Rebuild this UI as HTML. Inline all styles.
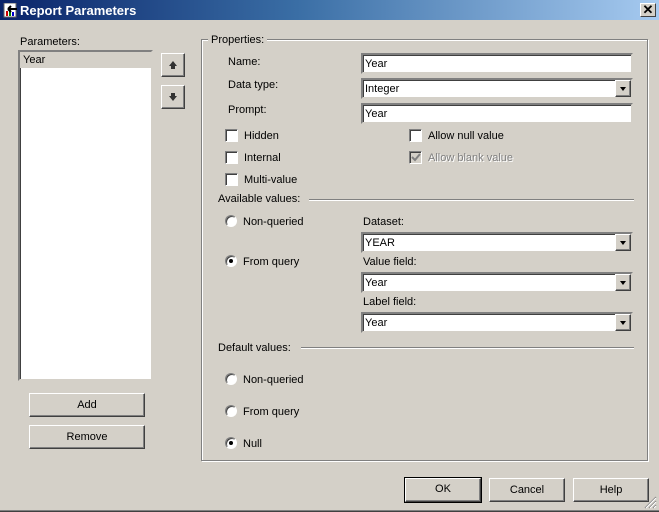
<!DOCTYPE html>
<html><head><meta charset="utf-8"><style>
*{box-sizing:border-box;margin:0;padding:0}
body{width:659px;height:512px;background:#d4d0c8;font-family:"Liberation Sans",sans-serif;font-size:11px;color:#000;position:relative;overflow:hidden}
.a{position:absolute}
.title{left:0;top:0;width:659px;height:20px;background:linear-gradient(90deg,#0a246a 0%,#3a6ea5 45%,#a6caf0 100%);}
.title span{position:absolute;left:20px;top:3px;color:#fff;font-weight:bold;font-size:13px}
.close{left:640px;top:3px;width:16px;height:14px;background:#d4d0c8;border:1px solid;border-color:#fff #404040 #404040 #fff;font-size:13px;font-weight:bold;text-align:center;line-height:12px}
.sunk{background:#fff;border:2px solid;border-color:#808080 #d4d0c8 #d4d0c8 #808080;box-shadow:inset 1px 1px 0 #404040}
.btn{background:#d4d0c8;border:1px solid;border-color:#fff #404040 #404040 #fff;box-shadow:inset -1px -1px 0 #808080;text-align:center}
.tb{height:21px;padding:3px 0 0 2px}
.combo{height:21px;padding:3px 0 0 2px}
.combo i{position:absolute;right:0;top:0;width:16px;height:17px;background:#d4d0c8;border:1px solid;border-color:#fff #404040 #404040 #fff;box-shadow:inset -1px -1px 0 #808080}
.combo i:after{content:"";position:absolute;left:4px;top:6px;border:3.5px solid transparent;border-top:4px solid #000;border-bottom:0}
.cb{width:13px;height:13px;background:#fff;border:1px solid;border-color:#808080 #fff #fff #808080;box-shadow:inset 1px 1px 0 #404040}
.rb{width:12px;height:12px;border-radius:50%;background:#fff;border:1px solid;border-color:#808080 #fff #fff #808080;box-shadow:inset 1px 1px 0 #404040}
.rb.on:after{content:"";position:absolute;left:3px;top:3px;width:4px;height:4px;border-radius:50%;background:#000}
.line{height:2px;border-top:1px solid #808080;border-bottom:1px solid #fff}
.grp{left:201px;top:39px;width:447px;height:422px;border:1px solid #808080;box-shadow:1px 1px 0 #fff,inset 1px 1px 0 #fff}
</style></head><body>
<div class="a title"><svg class="a" style="left:3px;top:3px" width="15" height="15"><rect x="1" y="0" width="12" height="14" fill="#fff" stroke="#666"/><rect x="3" y="8" width="2" height="5" fill="#c00"/><rect x="6" y="7" width="2" height="6" fill="#080"/><rect x="9" y="9" width="2" height="4" fill="#00c"/><path d="M5 6h9M5 6l3-3M5 6l3 3" stroke="#000" stroke-width="2" fill="none"/></svg><span>Report Parameters</span></div>
<div class="a close">✕</div>

<div class="a" style="left:20px;top:36px">Parameters:</div>
<div class="a sunk" style="left:18px;top:50px;width:135px;height:331px"><div style="background:#d4d0c8;height:16px;padding:2px 0 0 3px">Year</div></div>
<div class="a btn" style="left:161px;top:53px;width:24px;height:24px"><svg width="22" height="22"><path d="M11 7l4 5h-2v3h-4v-3h-2z" fill="#333"/></svg></div>
<div class="a btn" style="left:161px;top:85px;width:24px;height:24px"><svg width="22" height="22"><path d="M11 15l4-5h-2v-3h-4v3h-2z" fill="#333"/></svg></div>
<div class="a btn" style="left:29px;top:393px;width:116px;height:24px;line-height:22px">Add</div>
<div class="a btn" style="left:29px;top:425px;width:116px;height:24px;line-height:22px">Remove</div>

<div class="a grp"></div>
<div class="a" style="left:208px;top:34px;background:#d4d0c8;padding:0 3px">Properties:</div>
<div class="a" style="left:228px;top:56px">Name:</div>
<div class="a sunk tb" style="left:361px;top:53px;width:272px">Year</div>
<div class="a" style="left:228px;top:79px">Data type:</div>
<div class="a sunk combo" style="left:361px;top:78px;width:272px">Integer<i></i></div>
<div class="a" style="left:228px;top:104px">Prompt:</div>
<div class="a sunk tb" style="left:361px;top:103px;width:272px">Year</div>

<div class="a cb" style="left:225px;top:129px"></div><div class="a" style="left:244px;top:130px">Hidden</div>
<div class="a cb" style="left:225px;top:151px"></div><div class="a" style="left:244px;top:152px">Internal</div>
<div class="a cb" style="left:225px;top:173px"></div><div class="a" style="left:244px;top:174px">Multi-value</div>
<div class="a cb" style="left:409px;top:129px"></div><div class="a" style="left:428px;top:130px">Allow null value</div>
<div class="a cb" style="left:409px;top:151px;background:#d4d0c8"><svg class="a" style="left:1px;top:1px" width="10" height="10"><path d="M1 4l3 3 5-6" stroke="#808080" stroke-width="2" fill="none"/></svg></div><div class="a" style="left:428px;top:152px;color:#808080;text-shadow:1px 1px 0 #fff">Allow blank value</div>

<div class="a" style="left:218px;top:193px">Available values:</div>
<div class="a line" style="left:309px;top:199px;width:325px"></div>
<div class="a rb" style="left:225px;top:215px"></div><div class="a" style="left:243px;top:216px">Non-queried</div>
<div class="a rb on" style="left:225px;top:255px"></div><div class="a" style="left:243px;top:256px">From query</div>
<div class="a" style="left:363px;top:216px">Dataset:</div>
<div class="a sunk combo" style="left:361px;top:232px;width:272px">YEAR<i></i></div>
<div class="a" style="left:363px;top:256px">Value field:</div>
<div class="a sunk combo" style="left:361px;top:272px;width:272px">Year<i></i></div>
<div class="a" style="left:363px;top:296px">Label field:</div>
<div class="a sunk combo" style="left:361px;top:312px;width:272px">Year<i></i></div>

<div class="a" style="left:218px;top:342px">Default values:</div>
<div class="a line" style="left:301px;top:347px;width:333px"></div>
<div class="a rb" style="left:225px;top:373px"></div><div class="a" style="left:243px;top:374px">Non-queried</div>
<div class="a rb" style="left:225px;top:405px"></div><div class="a" style="left:243px;top:406px">From query</div>
<div class="a rb on" style="left:225px;top:437px"></div><div class="a" style="left:243px;top:438px">Null</div>

<div class="a btn" style="left:405px;top:478px;width:76px;height:24px;line-height:21px;outline:1px solid #000">OK</div>
<div class="a btn" style="left:489px;top:478px;width:76px;height:24px;line-height:22px">Cancel</div>
<div class="a btn" style="left:573px;top:478px;width:76px;height:24px;line-height:22px">Help</div>
<svg class="a" style="left:644px;top:496px" width="13" height="13"><path d="M12 1L1 12M12 5L5 12M12 9L9 12" stroke="#808080" stroke-width="1.2"/><path d="M12 2L2 12M12 6L6 12M12 10L10 12" stroke="#fff" stroke-width="1"/></svg>
<div class="a" style="left:0;top:510px;width:659px;height:2px;border-top:1px solid #808080;border-bottom:1px solid #404040"></div>
</body></html>
